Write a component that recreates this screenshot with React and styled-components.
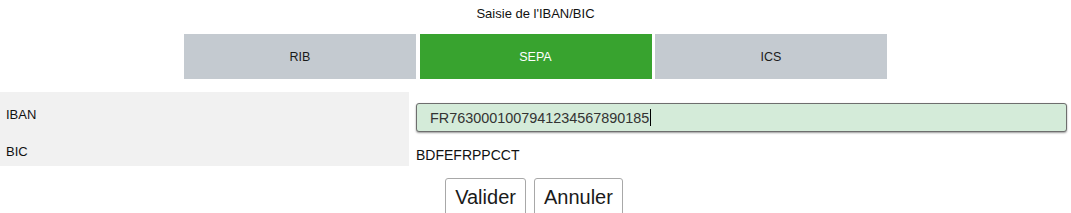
import React from "react";
import styled, { createGlobalStyle } from "styled-components";

const Global = createGlobalStyle`
  html, body { margin: 0; padding: 0; background: #fff; }
  body { font-family: "Liberation Sans", Arial, sans-serif; color: #222; }
  * { box-sizing: border-box; }
`;

const Page = styled.div`
  width: 1071px;
  display: flex;
  flex-direction: column;
`;

const Title = styled.div`
  text-align: center;
  font-size: 13px;
  line-height: 16px;
  padding-top: 6px;
  height: 34px;
  color: #111;
`;

const Tabs = styled.div`
  display: flex;
  justify-content: center;
  gap: 3.5px;
  height: 45px;
`;

const Tab = styled.div`
  width: 232px;
  height: 45px;
  display: flex;
  align-items: center;
  justify-content: center;
  font-size: 12.5px;
  background: ${(p) => (p.$active ? "#38a32f" : "#c4cad0")};
  color: ${(p) => (p.$active ? "#fff" : "#1a1a1a")};
  cursor: pointer;
`;

const Form = styled.div`
  margin-top: 13px;
  display: grid;
  grid-template-columns: 409px 1fr;
  grid-template-rows: 44px 30px;
`;

const Label = styled.div`
  background: #f1f1f1;
  font-size: 13px;
  padding-left: 6px;
  display: flex;
  align-items: center;
  color: #111;
`;

const Value = styled.div`
  padding: ${(p) => p.$pad || "0"};
  padding-left: 7px;
  padding-right: 4px;
  font-size: 14px;
  color: #111;
`;

const Input = styled.div`
  height: 29px;
  border: 1px solid #6e6e6e;
  border-radius: 3px;
  background: #d4ebd9;
  box-shadow: 0 1px 2px rgba(0, 0, 0, 0.4);
  display: flex;
  align-items: center;
  padding-left: 13px;
  font-size: 14.4px;
  color: #333;
`;

const Caret = styled.span`
  display: inline-block;
  width: 1px;
  height: 17px;
  background: #000;
  margin-left: 1px;
`;

const Actions = styled.div`
  margin-top: 12px;
  display: flex;
  justify-content: center;
  gap: 8px;
  padding-right: 3px;
`;

const Button = styled.button`
  font-family: "Liberation Sans", Arial, sans-serif;
  font-size: 20px;
  line-height: 23px;
  padding: 7px 9px 6px;
  background: #fff;
  border: 1px solid #a8a8a8;
  border-radius: 3px;
  color: #1a1a1a;
`;

export default function App() {
  return (
    <>
      <Global />
      <Page>
        <Title>Saisie de l'IBAN/BIC</Title>
        <Tabs>
          <Tab>RIB</Tab>
          <Tab $active>SEPA</Tab>
          <Tab>ICS</Tab>
        </Tabs>
        <Form>
          <Label>IBAN</Label>
          <Value $pad="11px 0 0">
            <Input>
              FR7630001007941234567890185
              <Caret />
            </Input>
          </Value>
          <Label>BIC</Label>
          <Value $pad="11px 0 0">BDFEFRPPCCT</Value>
        </Form>
        <Actions>
          <Button>Valider</Button>
          <Button>Annuler</Button>
        </Actions>
      </Page>
    </>
  );
}
